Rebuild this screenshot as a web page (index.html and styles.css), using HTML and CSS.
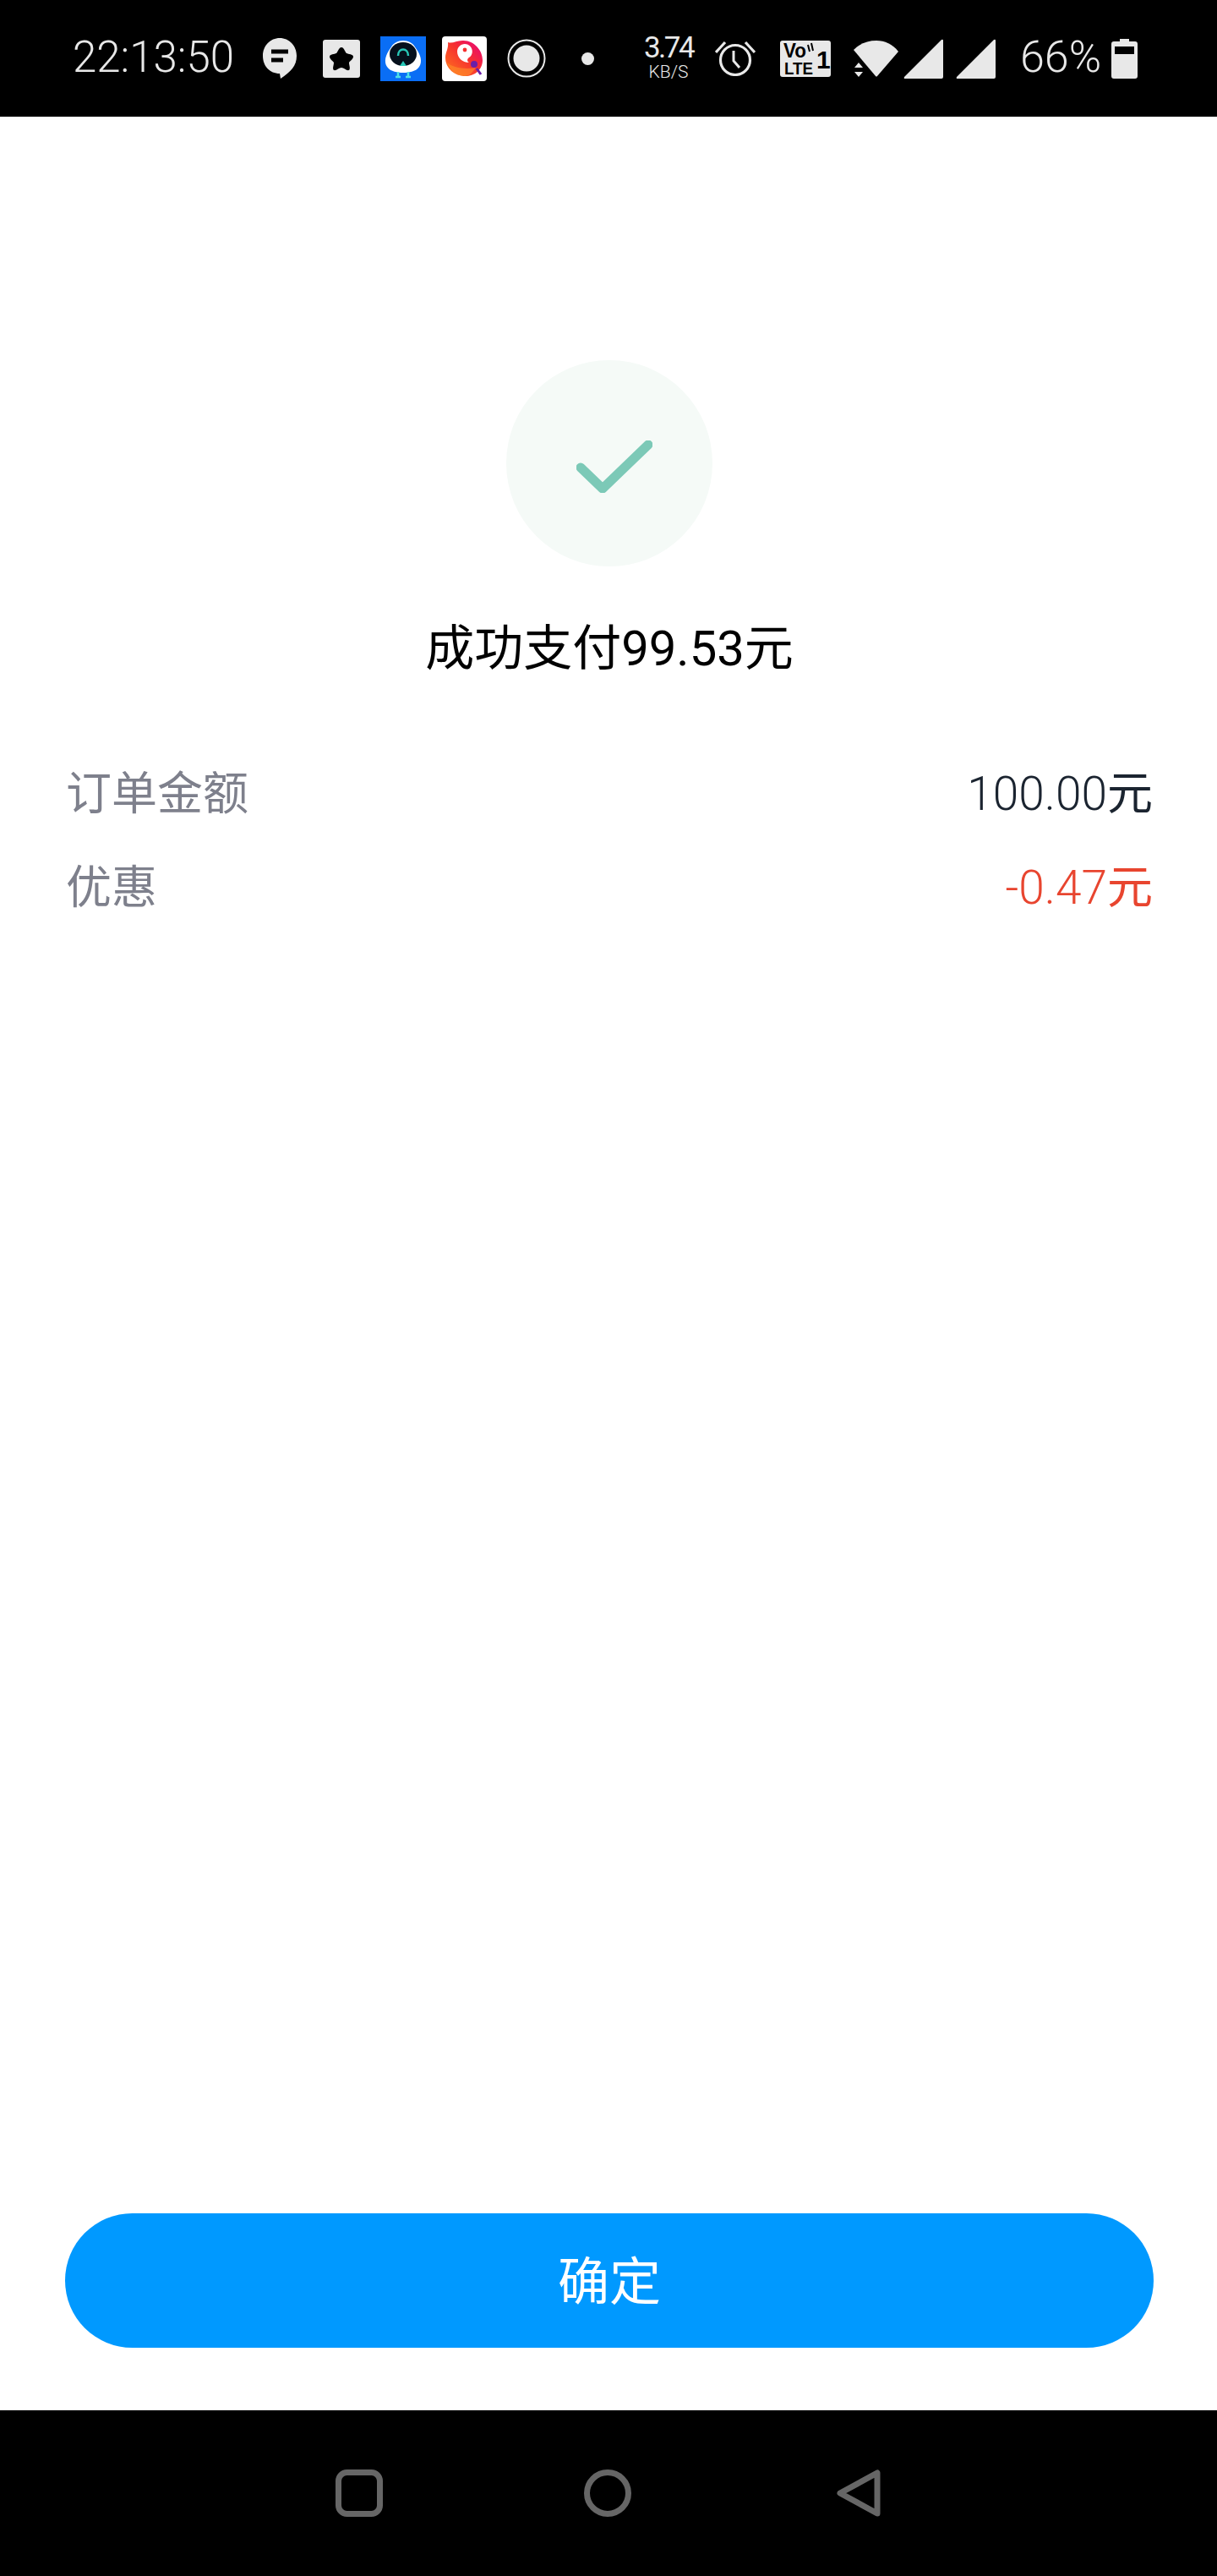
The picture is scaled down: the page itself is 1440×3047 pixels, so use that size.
FILE: index.html
```html
<!DOCTYPE html>
<html lang="zh-CN">
<head>
<meta charset="utf-8">
<title>支付结果</title>
<link rel="stylesheet" href="styles.css">
</head>
<body>
<div class="screen">
  <header class="status">
    <span class="time">22:13:50</span>
    <svg class="i-bubble" viewBox="0 0 40 48"><path d="M20 0C31 0 40 9 40 21C40 33 33 40 21 48L20 42C8 42 0 33 0 21C0 9 9 0 20 0Z" fill="#e8e8e8"/><path d="M10 16H30M10 26H24" stroke="#000" stroke-width="5" fill="none"/></svg>
    <svg class="i-star" viewBox="0 0 44 45"><rect width="44" height="45" rx="3" fill="#e8e8e8"/><path d="M22 9C25 9 26 14 28 16C30 17 36 17 36 20C36 23 32 25 31 27C31 30 33 34 31 36C28 37 25 33 22 33C19 33 16 37 13 36C11 34 13 30 13 27C12 25 8 23 8 20C8 17 14 17 16 16C18 14 19 9 22 9Z" fill="#000"/></svg>
    <svg class="i-blue" viewBox="0 0 54 53"><rect width="54" height="53" fill="#0a6ef5"/><path d="M12 14C15 8 21 5 27 5C33 5 39 8 42 14C48 22 50 30 46 36C42 42 33 43 27 43C21 43 12 42 8 36C4 30 6 22 12 14Z" fill="#fff"/><ellipse cx="27" cy="21" rx="16" ry="14" fill="#06101c"/><path d="M21 23C21 13 33 13 33 23" stroke="#28c7b8" stroke-width="2.500" fill="none"/><path d="M23 35L27 29L31 35Z" fill="#28c7b8"/><path d="M21 42V47M33 42V47M18 48H24M30 48H36" stroke="#4fe0e6" stroke-width="2.500" fill="none"/></svg>
    <svg class="i-red" viewBox="0 0 53 53"><rect width="53" height="53" rx="4" fill="#fff"/><defs><linearGradient id="redfill" x1="0" y1="1" x2="1" y2="0"><stop offset="0" stop-color="#ff7a1c"/><stop offset=".55" stop-color="#f6302f"/><stop offset="1" stop-color="#e6007f"/></linearGradient></defs><path d="M7 7C12 9 17 5 24 5C37 4 48 16 48 28C48 40 38 47 28 47C15 47 4 38 4 25C4 19 8 14 7 7Z" fill="url(#redfill)"/><path d="M6 31C14 38 28 39 40 37C36 43 32 47 27 47C17 47 9 40 6 31Z" fill="#ff8f2a" opacity=".6"/><path d="M27 9C36 9 39 21 32 25C29 27 30 30 32 31C24 31 18 25 18 18C18 13 22 9 27 9Z" fill="#fff"/><circle cx="27" cy="16" r="2.400" fill="#f6302f"/><circle cx="38" cy="33" r="4" fill="#6a1fa8"/><path d="M41 38L46 45" stroke="#6a1fa8" stroke-width="3"/></svg>
    <svg class="i-ring" viewBox="0 0 46 46"><circle cx="23" cy="23" r="21.500" fill="none" stroke="#e8e8e8" stroke-width="2"/><circle cx="23" cy="23" r="15.500" fill="#e8e8e8"/></svg>
    <span class="dot"></span>
    <div class="speed"><span class="speed-num">3.74</span><span class="speed-unit">KB/S</span></div>
    <svg class="i-alarm" viewBox="0 0 48 42"><circle cx="24" cy="23" r="17.500" fill="none" stroke="#e8e8e8" stroke-width="3.200"/><path d="M22 12V24L29 32" fill="none" stroke="#e8e8e8" stroke-width="3"/><path d="M1 14L12 2M47 14L36 2" stroke="#e8e8e8" stroke-width="3.200"/></svg>
    <svg class="i-volte" viewBox="0 0 60 43"><rect width="60" height="43" rx="3" fill="#e8e8e8"/><text class="vt-vo" x="4" y="20" textLength="27" lengthAdjust="spacingAndGlyphs">Vo</text><path d="M33 5L35 13M37 3L39 12" stroke="#000" stroke-width="2" fill="none"/><text class="vt-lte" x="5" y="40" textLength="34" lengthAdjust="spacingAndGlyphs">LTE</text><text class="vt-sim" x="43" y="33">1</text></svg>
    <svg class="i-wifi" viewBox="0 0 53 43"><path d="M0 11C8 3 17 0 27 0C37 0 46 4 53 13L28 42Q27 43 26 42Z" fill="#e8e8e8"/><path d="M1 32H11L6 26ZM1 37H11L6 43Z" fill="#e8e8e8"/></svg>
    <svg class="i-sig i-sig-a" viewBox="0 0 47 47"><path d="M47 2V45Q47 47 45 47H2Q0 47 1 45L45 1Q47 0 47 2Z" fill="#e8e8e8"/></svg>
    <svg class="i-sig i-sig-b" viewBox="0 0 47 47"><path d="M47 2V45Q47 47 45 47H2Q0 47 1 45L45 1Q47 0 47 2Z" fill="#e8e8e8"/></svg>
    <span class="pct">66%</span>
    <svg class="i-batt" viewBox="0 0 31 47"><path d="M10 0H21V3H28Q31 3 31 6V44Q31 47 28 47H3Q0 47 0 44V6Q0 3 3 3H10Z" fill="#e8e8e8"/><rect x="4" y="9" width="23" height="9" fill="#000"/></svg>
  </header>

  <main class="content">
    <div class="badge">
      <svg class="check" viewBox="0 0 90 62"><path d="M5 32L31 57L85 5" fill="none" stroke="#7cc9b7" stroke-width="11" stroke-linecap="round" stroke-linejoin="round"/></svg>
    </div>
    <h1 class="title">成功支付99.53元</h1>
    <dl class="rows">
      <div class="row"><dt>订单金额</dt><dd><span class="num">100.00</span>元</dd></div>
      <div class="row"><dt>优惠</dt><dd class="minus"><span class="num">-0.47</span>元</dd></div>
    </dl>
    <button class="confirm" type="button">确定</button>
  </main>

  <nav class="navbar">
    <svg class="nav-icon nav-square" viewBox="0 0 56 56"><rect x="3.500" y="3.500" width="49" height="49" rx="10" fill="none" stroke="#666" stroke-width="7"/></svg>
    <svg class="nav-icon nav-circle" viewBox="0 0 56 56"><circle cx="28" cy="28" r="24.500" fill="none" stroke="#666" stroke-width="7"/></svg>
    <svg class="nav-icon nav-back" viewBox="0 0 52 56"><path d="M48 4V52L4 28Z" fill="none" stroke="#666" stroke-width="7" stroke-linejoin="round"/></svg>
  </nav>
</div>
</body>
</html>
```
FILE: styles.css
```css
* { box-sizing: border-box; }
html, body { margin: 0; padding: 0; background: #fff; }
body { font-family: Roboto, "Noto Sans CJK SC", sans-serif; font-weight: 400; }
.screen { width: 1440px; height: 3047px; display: flex; flex-direction: column; }
.num { font-weight: 300; }

.status { height: 138px; flex: none; background: #000; color: #e8e8e8; display: flex; align-items: center; padding-left: 86px; font-family: Roboto, "Noto Sans", sans-serif; font-weight: 300; }
.status svg { display: block; flex: none; }
.time { width: 191px; flex: none; font-size: 51px; line-height: 1; margin-top: -3px; white-space: nowrap; }
.i-bubble { width: 40px; height: 48px; margin-left: 34px; }
.i-star { width: 44px; height: 45px; margin-left: 31px; }
.i-blue { width: 54px; height: 53px; margin-left: 24px; }
.i-red { width: 53px; height: 53px; margin-left: 19px; }
.i-ring { width: 46px; height: 46px; margin-left: 24px; }
.dot { width: 15px; height: 15px; border-radius: 50%; background: #e8e8e8; margin-left: 42px; flex: none; }
.speed { width: 54px; margin-left: 61px; flex: none; display: flex; flex-direction: column; align-items: center; }
.speed-num { font-size: 35px; line-height: 30px; font-weight: 400; letter-spacing: -2.500px; }
.speed-unit { font-size: 21px; line-height: 22px; margin-top: 2px; }
.i-alarm { width: 48px; height: 42px; margin-left: 28px; }
.i-volte { width: 60px; height: 43px; margin-left: 29px; }
.vt-vo, .vt-lte, .vt-sim { font-family: "Liberation Sans", sans-serif; font-weight: 700; fill: #000; }
.vt-vo { font-size: 23px; }
.vt-lte { font-size: 21px; }
.vt-sim { font-size: 30px; }
.i-wifi { width: 53px; height: 43px; margin-left: 27px; }
.i-sig { width: 47px; height: 47px; }
.i-sig-a { margin-left: 6px; }
.i-sig-b { margin-left: 15px; }
.pct { width: 93px; margin-left: 29px; font-size: 52px; line-height: 1; flex: none; margin-top: -3px; white-space: nowrap; }
.i-batt { width: 31px; height: 47px; margin-left: 15px; }

.content { flex: 1; display: flex; flex-direction: column; align-items: center; background: #fff; padding: 288px 75px 74px 77px; }
.badge { width: 244px; height: 244px; flex: none; border-radius: 50%; background: #f5faf7; display: flex; align-items: center; justify-content: center; }
.check { width: 90px; height: 62px; display: block; margin: 8px 0 0 12px; }
.title { margin: 59px 0 0; font-size: 58px; font-weight: 400; line-height: 76px; color: #000; white-space: nowrap; }
.rows { width: 100%; margin: 0; padding: 90px 1px 0 0; display: flex; flex-direction: column; gap: 32px; }
.row { display: flex; justify-content: space-between; align-items: center; height: 79px; font-size: 54px; }
.row .num { font-size: 55px; }
.row dt { color: #7e808c; margin-left: 1px; }
.row dd { margin: 0; color: #1b2430; }
.row dd.minus { color: #e8452f; }
.confirm { margin-top: auto; width: 100%; height: 159px; flex: none; border: 0; border-radius: 80px; background: #0099ff; color: #fff; font-family: inherit; font-weight: 400; font-size: 61px; padding: 0 0 6px; }

.navbar { height: 196px; flex: none; background: #000; display: flex; align-items: center; padding-left: 397px; }
.nav-icon { display: block; height: 56px; flex: none; }
.nav-square { width: 56px; }
.nav-circle { width: 56px; margin-left: 238px; }
.nav-back { width: 52px; margin-left: 243px; }
```
